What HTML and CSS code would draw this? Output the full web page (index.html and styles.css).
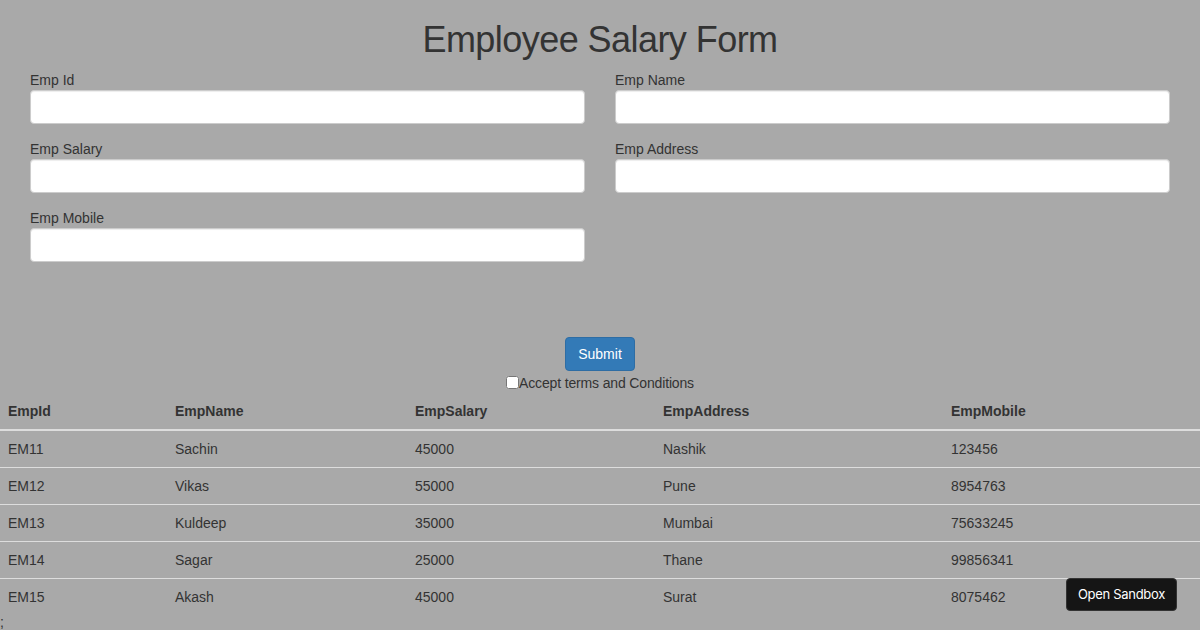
FILE: index.html
```html
<!DOCTYPE html>
<html>
<head>
<meta charset="utf-8">
<link rel="stylesheet" href="styles.css">
</head>
<body>
<h1 class="title">Employee Salary Form</h1>
<form class="container">
  <div class="grid">
    <div class="field"><label>Emp Id</label><input type="text" class="control"></div>
    <div class="field"><label>Emp Name</label><input type="text" class="control"></div>
    <div class="field"><label>Emp Salary</label><input type="text" class="control"></div>
    <div class="field"><label>Emp Address</label><input type="text" class="control"></div>
    <div class="field"><label>Emp Mobile</label><input type="text" class="control"></div>
  </div>
  <div class="actions">
    <button type="button" class="btn-primary">Submit</button>
    <div class="terms"><input type="checkbox" class="check"><span class="terms-text">Accept terms and Conditions</span></div>
  </div>
</form>
<table class="emp-table">
  <colgroup>
    <col class="c1"><col class="c2"><col class="c3"><col class="c4"><col class="c5">
  </colgroup>
  <thead>
    <tr><th>EmpId</th><th>EmpName</th><th>EmpSalary</th><th>EmpAddress</th><th>EmpMobile</th></tr>
  </thead>
  <tbody>
    <tr><td>EM11</td><td>Sachin</td><td>45000</td><td>Nashik</td><td>123456</td></tr>
    <tr><td>EM12</td><td>Vikas</td><td>55000</td><td>Pune</td><td>8954763</td></tr>
    <tr><td>EM13</td><td>Kuldeep</td><td>35000</td><td>Mumbai</td><td>75633245</td></tr>
    <tr><td>EM14</td><td>Sagar</td><td>25000</td><td>Thane</td><td>99856341</td></tr>
    <tr><td>EM15</td><td>Akash</td><td>45000</td><td>Surat</td><td>8075462</td></tr>
  </tbody>
</table>
<div class="semi">;</div>
<a class="sandbox-btn">Open Sandbox</a>
</body>
</html>
```

FILE: styles.css
```css
* { box-sizing: border-box; }
html, body { margin: 0; padding: 0; }
body {
  background: #a9a9a9;
  color: #333;
  font-family: "Liberation Sans", Arial, sans-serif;
  font-size: 14px;
  line-height: 20px;
  overflow: hidden;
  height: 630px;
}
.title {
  margin: 20px 0 10px;
  font-size: 36px;
  font-weight: 500;
  line-height: 39.6px;
  text-align: center;
  letter-spacing: -0.55px;
}
.container {
  width: 1170px;
  margin: 0 auto;
}
.grid {
  display: grid;
  grid-template-columns: 1fr 1fr;
}
.field {
  padding: 0 15px;
  margin-bottom: 15px;
}
.field label {
  display: block;
  font-weight: normal;
  line-height: 20px;
  height: 20px;
}
.control {
  display: block;
  width: 100%;
  height: 34px;
  margin: 0;
  padding: 6px 12px;
  font: inherit;
  background: #fff;
  border: 1px solid #ccc;
  border-radius: 4px;
  box-shadow: inset 0 1px 1px rgba(0,0,0,.075);
}
.actions {
  padding-top: 60px;
  text-align: center;
}
.btn-primary {
  display: inline-block;
  height: 34px;
  width: 70px;
  padding: 0;
  font: inherit;
  color: #fff;
  background: #337ab7;
  border: 1px solid #2e6da4;
  border-radius: 4px;
  margin: 0;
  vertical-align: top;
}
.terms {
  line-height: 20px;
  height: 22px;
  padding-top: 2px;
}
.terms-text { letter-spacing: -0.15px; }
.check {
  width: 13px;
  height: 13px;
  margin: 0;
  vertical-align: -1px;
}
.emp-table {
  width: 100%;
  border-collapse: collapse;
  border-spacing: 0;
  table-layout: fixed;
}
.c1 { width: 167px; }
.c2 { width: 240px; }
.c3 { width: 248px; }
.c4 { width: 288px; }
.emp-table th, .emp-table td {
  padding: 8px;
  text-align: left;
  line-height: 20px;
}
.emp-table th {
  font-weight: bold;
  border-bottom: 2px solid #ddd;
}
.emp-table td {
  border-top: 1px solid #ddd;
}
.emp-table tbody tr:first-child td { border-top: 0; }
.semi {
  line-height: 14px;
  font-size: 14px;
}
.sandbox-btn {
  position: fixed;
  right: 23px;
  bottom: 19px;
  width: 111px;
  height: 33px;
  line-height: 31px;
  text-align: center;
  background: #151515;
  color: #fff;
  font-family: "Inter", "Liberation Sans", sans-serif;
  font-size: 13px;
  letter-spacing: -0.3px;
  border-radius: 4px;
  border: 1px solid #333;
}
```
